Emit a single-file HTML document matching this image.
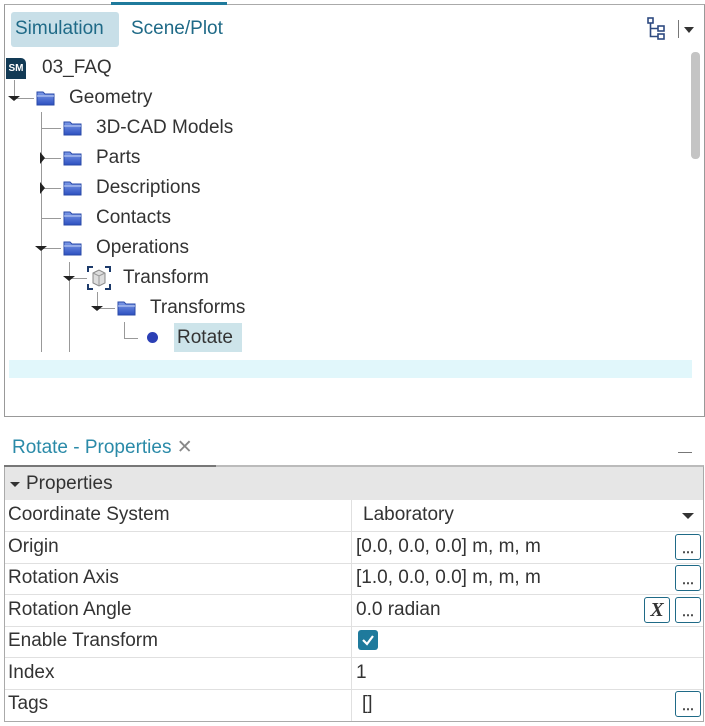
<!DOCTYPE html>
<html><head><style>
body{margin:0;width:705px;height:721px;background:#fff;font-family:"Liberation Sans",sans-serif;font-size:19px;color:#333;position:relative;overflow:hidden}
.a{position:absolute;white-space:nowrap}
.vl{position:absolute;width:1px;background:#999}
.hl{position:absolute;height:1px;background:#999}
.tri{position:absolute;width:0;height:0}
.row{position:absolute;left:5px;width:698px;height:31px;border-bottom:1px solid #e0e0e0}
.row .k{position:absolute;left:3px;top:4px}
.row .v{position:absolute;left:351px;top:4px}
.btn{position:absolute;right:2px;top:2px;width:26px;height:26px;border:1px solid #1f6a87;border-radius:3px;box-sizing:border-box;font-size:12px;line-height:34px;text-align:center;color:#333;font-weight:bold}
</style></head><body>
<div class="a" style="left:4px;top:4px;width:699px;height:411px;border:1px solid #999;border-top:1px solid #aaa"></div>
<div class="a" style="left:111px;top:2px;width:116px;height:3px;background:#1f7a9c"></div>
<div class="a" style="left:11px;top:12px;width:108px;height:35px;background:#c8dfe8;border-radius:3px"></div>
<div class="a" style="left:15px;top:18px;color:#1f6a87">Simulation</div>
<div class="a" style="left:131px;top:18px;color:#1f6a87">Scene/Plot</div>
<svg class="a" style="left:647px;top:17px" width="20" height="24" viewBox="0 0 20 24" fill="none" stroke="#2e4a80" stroke-width="1.6"><rect x="1" y="1" width="5" height="5"/><rect x="11" y="9" width="6" height="5"/><rect x="11" y="17" width="6" height="5"/><path d="M3.5 6V19.5H11M3.5 11.5H11"/></svg>
<div class="a" style="left:678px;top:20px;width:1px;height:18px;background:#777"></div>
<div class="tri" style="left:684px;top:27px;border-left:5px solid transparent;border-right:5px solid transparent;border-top:6px solid #333"></div>
<div class="a" style="left:691px;top:52px;width:9px;height:107px;background:#c4c4c4;border-radius:4px"></div>
<div class="a" style="left:9px;top:360px;width:683px;height:18px;background:#e1f7fb"></div>

<div class="vl" style="left:14px;top:80px;height:19px"></div>
<div class="hl" style="left:14px;top:98px;width:20px"></div>
<div class="vl" style="left:41px;top:112px;height:240px"></div>
<div class="hl" style="left:41px;top:128px;width:20px"></div>
<div class="hl" style="left:41px;top:158px;width:20px"></div>
<div class="hl" style="left:41px;top:188px;width:20px"></div>
<div class="hl" style="left:41px;top:218px;width:20px"></div>
<div class="hl" style="left:41px;top:248px;width:20px"></div>
<div class="vl" style="left:69px;top:262px;height:90px"></div>
<div class="hl" style="left:69px;top:278px;width:18px"></div>
<div class="vl" style="left:97px;top:292px;height:16px"></div>
<div class="hl" style="left:97px;top:308px;width:18px"></div>
<div class="vl" style="left:124px;top:322px;height:16px"></div>
<div class="hl" style="left:124px;top:338px;width:14px"></div>
<div class="tri" style="left:8px;top:96px;border-left:6px solid transparent;border-right:6px solid transparent;border-top:5px solid #222"></div>
<div class="tri" style="left:35px;top:246px;border-left:6px solid transparent;border-right:6px solid transparent;border-top:5px solid #222"></div>
<div class="tri" style="left:63px;top:276px;border-left:6px solid transparent;border-right:6px solid transparent;border-top:5px solid #222"></div>
<div class="tri" style="left:91px;top:306px;border-left:6px solid transparent;border-right:6px solid transparent;border-top:5px solid #222"></div>
<div class="tri" style="left:40px;top:152px;border-top:6px solid transparent;border-bottom:6px solid transparent;border-left:5px solid #222"></div>
<div class="tri" style="left:40px;top:182px;border-top:6px solid transparent;border-bottom:6px solid transparent;border-left:5px solid #222"></div>

<div class="a" style="left:6px;top:58px;width:20px;height:21px;background:#123a55;color:#fff;font-size:10px;font-weight:bold;line-height:22px;text-align:center;border-radius:0 5px 0 0">SM</div>
<svg width="0" height="0" style="position:absolute"><defs><linearGradient id="g" x1="0" y1="0" x2="0" y2="1"><stop offset="0" stop-color="#7d9be8"/><stop offset="1" stop-color="#2c4fc0"/></linearGradient></defs></svg>
<svg class="a" style="left:36px;top:90px" width="20" height="16"><path d="M1 2h6l2 2h9v11H1z" fill="url(#g)" stroke="#2a4aa8"/><path d="M1 6h17" stroke="#c8d6f5"/></svg>
<svg class="a" style="left:63px;top:120px" width="20" height="16"><path d="M1 2h6l2 2h9v11H1z" fill="url(#g)" stroke="#2a4aa8"/><path d="M1 6h17" stroke="#c8d6f5"/></svg>
<svg class="a" style="left:63px;top:150px" width="20" height="16"><path d="M1 2h6l2 2h9v11H1z" fill="url(#g)" stroke="#2a4aa8"/><path d="M1 6h17" stroke="#c8d6f5"/></svg>
<svg class="a" style="left:63px;top:180px" width="20" height="16"><path d="M1 2h6l2 2h9v11H1z" fill="url(#g)" stroke="#2a4aa8"/><path d="M1 6h17" stroke="#c8d6f5"/></svg>
<svg class="a" style="left:63px;top:210px" width="20" height="16"><path d="M1 2h6l2 2h9v11H1z" fill="url(#g)" stroke="#2a4aa8"/><path d="M1 6h17" stroke="#c8d6f5"/></svg>
<svg class="a" style="left:63px;top:240px" width="20" height="16"><path d="M1 2h6l2 2h9v11H1z" fill="url(#g)" stroke="#2a4aa8"/><path d="M1 6h17" stroke="#c8d6f5"/></svg>
<svg class="a" style="left:117px;top:300px" width="20" height="16"><path d="M1 2h6l2 2h9v11H1z" fill="url(#g)" stroke="#2a4aa8"/><path d="M1 6h17" stroke="#c8d6f5"/></svg>
<svg class="a" style="left:87px;top:266px" width="24" height="24" fill="none"><path d="M1 6V1h5M18 1h5v5M23 18v5h-5M6 23H1v-5" stroke="#1c3a6a" stroke-width="2"/><path d="M6 7l6-3 6 3v10l-6 3-6-3z" fill="#ddd" stroke="#888"/><path d="M6 7l6 3 6-3M12 10v10" stroke="#999"/></svg>
<div class="a" style="left:147px;top:332px;width:11px;height:11px;border-radius:50%;background:#2b3fb5"></div>
<div class="a" style="left:174px;top:323px;width:68px;height:29px;background:#cde4ea"></div>

<div class="a" style="left:42px;top:57px">03_FAQ</div>
<div class="a" style="left:69px;top:87px">Geometry</div>
<div class="a" style="left:96px;top:117px">3D-CAD Models</div>
<div class="a" style="left:96px;top:147px">Parts</div>
<div class="a" style="left:96px;top:177px">Descriptions</div>
<div class="a" style="left:96px;top:207px">Contacts</div>
<div class="a" style="left:96px;top:237px">Operations</div>
<div class="a" style="left:123px;top:267px">Transform</div>
<div class="a" style="left:150px;top:297px">Transforms</div>
<div class="a" style="left:177px;top:327px">Rotate</div>

<div class="a" style="left:12px;top:436px;color:#2a8aa8">Rotate - Properties <span style="color:#888">✕</span></div>
<div class="a" style="left:678px;top:452px;width:14px;height:1px;background:#777"></div>
<div class="a" style="left:4px;top:465px;width:700px;height:257px;border:1px solid #aaa;border-top:2px solid #bbb;box-sizing:border-box"></div>
<div class="a" style="left:4px;top:465px;width:212px;height:2px;background:#777"></div>
<div class="a" style="left:5px;top:467px;width:698px;height:33px;background:#e6e6e6"></div>
<div class="tri" style="left:10px;top:482px;border-left:5px solid transparent;border-right:5px solid transparent;border-top:5px solid #333"></div>
<div class="a" style="left:26px;top:473px">Properties</div>
<div class="a" style="left:351px;top:500px;width:1px;height:221px;background:#e0e0e0"></div>
<div class="row" style="top:500px"><span class="k">Coordinate System</span><span class="v" style="left:358px">Laboratory</span><div class="tri" style="left:677px;top:13px;border-left:6px solid transparent;border-right:6px solid transparent;border-top:6px solid #333"></div></div>
<div class="row" style="top:532px"><span class="k">Origin</span><span class="v">[0.0, 0.0, 0.0] m, m, m</span><div class="btn">⋯</div></div>
<div class="row" style="top:563px"><span class="k">Rotation Axis</span><span class="v">[1.0, 0.0, 0.0] m, m, m</span><div class="btn">⋯</div></div>
<div class="row" style="top:595px"><span class="k">Rotation Angle</span><span class="v">0.0 radian</span><div class="btn" style="right:33px;font-family:'Liberation Serif',serif;font-style:italic;font-size:20px;line-height:24px">X</div><div class="btn">⋯</div></div>
<div class="row" style="top:626px"><span class="k">Enable Transform</span><div class="a" style="left:353px;top:4px;width:20px;height:20px;background:#1f7a9c;border-radius:3px"><svg width="20" height="20"><path d="M5 10l4 4 6-8" stroke="#fff" stroke-width="2.2" fill="none"/></svg></div></div>
<div class="row" style="top:658px"><span class="k">Index</span><span class="v">1</span></div>
<div class="row" style="top:689px;border:0"><span class="k">Tags</span><span class="v" style="left:357px">[]</span><div class="btn">⋯</div></div>
</body></html>
